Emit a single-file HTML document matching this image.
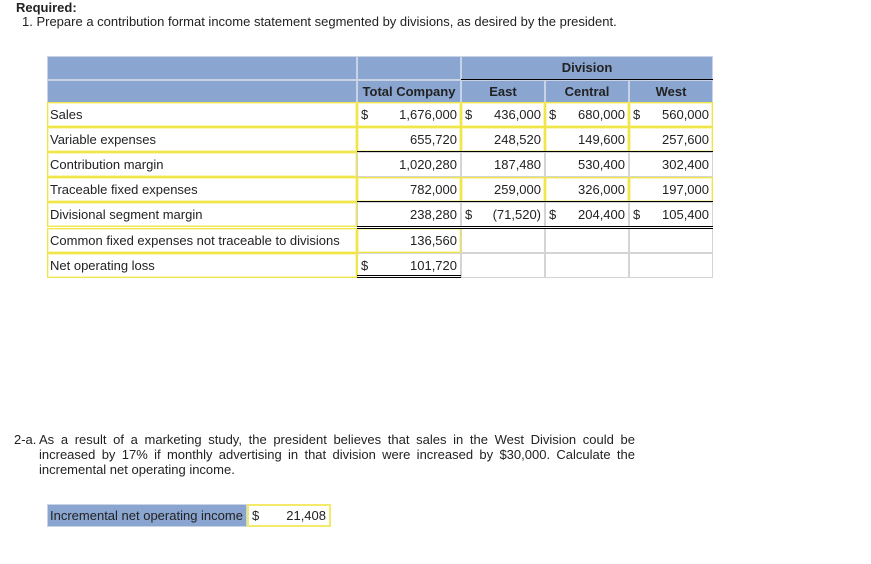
<!DOCTYPE html><html><head><style>
body{margin:0;width:871px;height:564px;background:#fff;font-family:"Liberation Sans",sans-serif;font-size:13px;color:#222;position:relative;overflow:hidden}
.a{position:absolute}
.c{position:absolute;box-sizing:border-box;border:1px solid #d4d4d4;height:25px;line-height:23px;padding:0 3px;white-space:nowrap}
.y{border:1px solid #f0e64a;box-shadow:inset 0 0 0 1px #faf5b8}
.r{text-align:right}
.h{position:absolute;background:#8aa5d0;box-sizing:border-box;border:1px solid #c9d3e6;font-weight:bold;text-align:center;line-height:21px;height:23px}
.ln{position:absolute;height:1px;background:#000}
</style></head><body>
<div class="a" style="left:16px;top:0px;font-weight:bold">Required:</div>
<div class="a" style="left:22px;top:14px">1. Prepare a contribution format income statement segmented by divisions, as desired by the president.</div>

<div class="h" style="left:47px;top:56px;width:310px;height:24px"></div>
<div class="h" style="left:357px;top:56px;width:104px;height:24px"></div>
<div class="h" style="left:461px;top:56px;width:252px;height:24px;line-height:22px">Division</div>
<div class="ln" style="left:461px;top:79px;width:252px"></div>
<div class="h" style="left:47px;top:80px;width:310px"></div>
<div class="h" style="left:357px;top:80px;width:104px">Total Company</div>
<div class="h" style="left:461px;top:80px;width:84px">East</div>
<div class="h" style="left:545px;top:80px;width:84px">Central</div>
<div class="h" style="left:629px;top:80px;width:84px">West</div>

<div class="c y" style="left:47px;top:102px;width:310px;padding-left:2px">Sales</div>
<div class="c y" style="left:47px;top:127px;width:310px;padding-left:2px">Variable expenses</div>
<div class="c y" style="left:47px;top:152px;width:310px;padding-left:2px">Contribution margin</div>
<div class="c y" style="left:47px;top:177px;width:310px;padding-left:2px">Traceable fixed expenses</div>
<div class="c y" style="left:47px;top:202px;width:310px;padding-left:2px">Divisional segment margin</div>
<div class="c y" style="left:47px;top:228px;width:310px;padding-left:2px">Common fixed expenses not traceable to divisions</div>
<div class="c y" style="left:47px;top:253px;width:310px;padding-left:2px">Net operating loss</div>

<div class="c y r" style="left:357px;top:102px;width:104px"><span style="float:left">$</span>1,676,000</div>
<div class="c y r" style="left:357px;top:127px;width:104px">655,720</div>
<div class="c r" style="left:357px;top:152px;width:104px">1,020,280</div>
<div class="c y r" style="left:357px;top:177px;width:104px">782,000</div>
<div class="c r" style="left:357px;top:202px;width:104px">238,280</div>
<div class="c y r" style="left:357px;top:228px;width:104px">136,560</div>
<div class="c r" style="left:357px;top:253px;width:104px;border-left:1px solid #f0e64a"><span style="float:left">$</span>101,720</div>

<div class="c y r" style="left:461px;top:102px;width:84px"><span style="float:left">$</span>436,000</div>
<div class="c y r" style="left:461px;top:127px;width:84px">248,520</div>
<div class="c r" style="left:461px;top:152px;width:84px">187,480</div>
<div class="c y r" style="left:461px;top:177px;width:84px">259,000</div>
<div class="c r" style="left:461px;top:202px;width:84px"><span style="float:left">$</span>(71,520)</div>
<div class="c" style="left:461px;top:228px;width:84px"></div>
<div class="c" style="left:461px;top:253px;width:84px"></div>

<div class="c y r" style="left:545px;top:102px;width:84px"><span style="float:left">$</span>680,000</div>
<div class="c y r" style="left:545px;top:127px;width:84px">149,600</div>
<div class="c r" style="left:545px;top:152px;width:84px">530,400</div>
<div class="c y r" style="left:545px;top:177px;width:84px">326,000</div>
<div class="c r" style="left:545px;top:202px;width:84px"><span style="float:left">$</span>204,400</div>
<div class="c" style="left:545px;top:228px;width:84px"></div>
<div class="c" style="left:545px;top:253px;width:84px"></div>

<div class="c y r" style="left:629px;top:102px;width:84px"><span style="float:left">$</span>560,000</div>
<div class="c y r" style="left:629px;top:127px;width:84px">257,600</div>
<div class="c r" style="left:629px;top:152px;width:84px">302,400</div>
<div class="c y r" style="left:629px;top:177px;width:84px">197,000</div>
<div class="c r" style="left:629px;top:202px;width:84px"><span style="float:left">$</span>105,400</div>
<div class="c" style="left:629px;top:228px;width:84px"></div>
<div class="c" style="left:629px;top:253px;width:84px"></div>

<div class="ln" style="left:357px;top:151px;width:356px"></div>
<div class="ln" style="left:357px;top:201px;width:356px"></div>
<div class="ln" style="left:357px;top:226px;width:356px"></div>
<div class="ln" style="left:357px;top:228px;width:356px"></div>
<div class="ln" style="left:357px;top:275px;width:104px"></div>
<div class="ln" style="left:357px;top:277px;width:104px"></div>

<div class="a" style="left:14px;top:432px;line-height:15px">2-a.</div>
<div class="a" style="left:39px;top:432px;width:596px;line-height:15px;text-align:justify">As a result of a marketing study, the president believes that sales in the West Division could be increased by 17% if monthly advertising in that division were increased by $30,000. Calculate the incremental net operating income.</div>

<div class="a" style="left:47px;top:504px;width:200px;height:23px;box-sizing:border-box;background:#8aa5d0;border:1px solid #c9d3e6;line-height:21px;padding-left:2px;white-space:nowrap">Incremental net operating income</div>
<div class="a" style="left:247px;top:504px;width:84px;height:23px;box-sizing:border-box;border:2px solid #f3ea6a;line-height:19px;padding:0 3px;text-align:right"><span style="float:left">$</span>21,408</div>
</body></html>
